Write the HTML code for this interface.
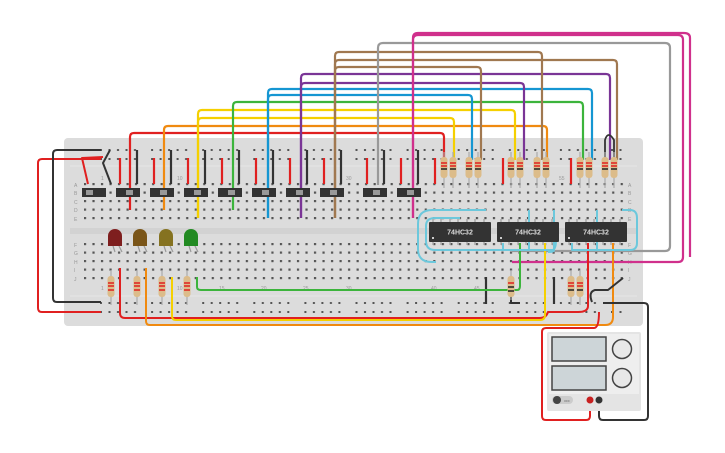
<!DOCTYPE html>
<html><head><style>html,body{margin:0;padding:0;background:#fff;width:725px;height:453px;overflow:hidden}</style></head>
<body>
<svg width="725" height="453" viewBox="0 0 725 453" xmlns="http://www.w3.org/2000/svg" font-family="Liberation Sans, sans-serif">
<defs>
<pattern id="h1" x="83.5" y="183" width="8.52" height="8.5" patternUnits="userSpaceOnUse"><rect x="0.4" y="0" width="2.2" height="2.2" fill="#555"/></pattern>
<pattern id="h2" x="83.5" y="243" width="8.52" height="8.5" patternUnits="userSpaceOnUse"><rect x="0.4" y="0" width="2.2" height="2.2" fill="#555"/></pattern>
<pattern id="r1" x="100" y="149" width="51.1" height="9" patternUnits="userSpaceOnUse">
<rect x="0" y="0" width="2" height="2" fill="#555"/><rect x="8.5" y="0" width="2" height="2" fill="#555"/><rect x="17" y="0" width="2" height="2" fill="#555"/><rect x="25.5" y="0" width="2" height="2" fill="#555"/><rect x="34" y="0" width="2" height="2" fill="#555"/></pattern>
<pattern id="r2" x="100" y="302" width="51.1" height="9" patternUnits="userSpaceOnUse">
<rect x="0" y="0" width="2" height="2" fill="#555"/><rect x="8.5" y="0" width="2" height="2" fill="#555"/><rect x="17" y="0" width="2" height="2" fill="#555"/><rect x="25.5" y="0" width="2" height="2" fill="#555"/><rect x="34" y="0" width="2" height="2" fill="#555"/></pattern>
</defs>
<rect x="64" y="138" width="579" height="188" rx="4" fill="#dcdcdc"/>
<line x1="70" y1="166" x2="637" y2="166" stroke="#e6e6e6"/>
<line x1="70" y1="296" x2="637" y2="296" stroke="#e6e6e6"/>
<rect x="70" y="228" width="567" height="6" fill="#d2d2d2"/>
<rect x="84" y="183" width="540" height="40" fill="url(#h1)"/>
<rect x="84" y="243" width="540" height="40" fill="url(#h2)"/>
<rect x="100" y="149" width="525" height="12" fill="url(#r1)"/>
<rect x="100" y="302" width="525" height="12" fill="url(#r2)"/>
<g font-size="5" fill="#999">
<text x="74" y="187">A</text><text x="74" y="195">B</text><text x="74" y="204">C</text><text x="74" y="212">D</text><text x="74" y="221">E</text>
<text x="74" y="247">F</text><text x="74" y="255">G</text><text x="74" y="264">H</text><text x="74" y="272">I</text><text x="74" y="281">J</text>
<text x="628" y="187">A</text><text x="628" y="195">B</text><text x="628" y="204">C</text><text x="628" y="212">D</text><text x="628" y="221">E</text>
<text x="628" y="247">F</text><text x="628" y="255">G</text><text x="628" y="264">H</text><text x="628" y="272">I</text><text x="628" y="281">J</text>
<text x="101" y="180">1</text><text x="177" y="180">10</text><text x="346" y="180">30</text><text x="559" y="180">55</text>
<text x="101" y="290">1</text><text x="177" y="290">10</text><text x="219" y="290">15</text><text x="261" y="290">20</text><text x="303" y="290">25</text><text x="346" y="290">30</text><text x="431" y="290">40</text><text x="474" y="290">45</text>
</g>
<g fill="none" stroke-width="2.2" stroke-linejoin="round">
<path d="M130 210 V137 Q130 133 134 133 H440 Q444 133 444 137 V160" stroke="#e02020"/>
<path d="M164 210 V130 Q164 126 168 126 H543 Q547 126 547 130 V160" stroke="#f08a10"/>
<path d="M198 218 V122 Q198 118 202 118 H450 Q454 118 454 122 V160" stroke="#f5d000"/>
<path d="M198 218 V114 Q198 110 202 110 H511 Q515 110 515 114 V160" stroke="#f5d000"/>
<path d="M233 210 V106 Q233 102 237 102 H579 Q583 102 583 106 V160" stroke="#3cb43c"/>
<path d="M268 218 V99 Q268 95 272 95 H468 Q472 95 472 99 V160" stroke="#1596d2"/>
<path d="M268 218 V93 Q268 89 272 89 H588 Q592 89 592 93 V160" stroke="#1596d2"/>
<path d="M301 218 V87 Q301 83 305 83 H520 Q524 83 524 87 V160" stroke="#7a3596"/>
<path d="M301 218 V78 Q301 74 305 74 H606 Q610 74 610 78 V160" stroke="#7a3596"/>
<path d="M335 218 V71 Q335 67 339 67 H477 Q481 67 481 71 V160" stroke="#a07850"/>
<path d="M335 218 V64 Q335 60 339 60 H613 Q617 60 617 64 V160" stroke="#a07850"/>
<path d="M335 218 V56 Q335 52 339 52 H538 Q542 52 542 56 V160" stroke="#a07850"/>
<path d="M378 185 V48 Q378 43 383 43 H665 Q670 43 670 48 V246 Q670 251 665 251 H512" stroke="#999"/>
<path d="M413 218 V40 Q413 35 418 35 H678 Q683 35 683 40 V257 Q683 262 678 262 H512" stroke="#d0308c"/>
<path d="M413 218 V38 Q413 33 418 33 H684 Q690 33 690 38 V257" stroke="#d0308c"/>
<path d="M605 160 V140 Q608 130 614 140 V160" stroke="#333" stroke-width="1.8"/>
</g>
<g stroke-width="2.2">
<g stroke="#e02020"><line x1="120" y1="158" x2="120" y2="184"/><line x1="154" y1="158" x2="154" y2="184"/><line x1="188" y1="158" x2="188" y2="184"/><line x1="222" y1="158" x2="222" y2="184"/><line x1="256" y1="158" x2="256" y2="184"/><line x1="290" y1="158" x2="290" y2="184"/><line x1="324" y1="158" x2="324" y2="184"/><line x1="367" y1="158" x2="367" y2="184"/><line x1="401" y1="158" x2="401" y2="184"/><line x1="435" y1="158" x2="435" y2="184"/><line x1="503" y1="158" x2="503" y2="184"/><line x1="571" y1="158" x2="571" y2="184"/></g>
<g stroke="#333"><line x1="137" y1="150" x2="137" y2="184"/><line x1="171" y1="150" x2="171" y2="184"/><line x1="205" y1="150" x2="205" y2="184"/><line x1="239" y1="150" x2="239" y2="184"/><line x1="273" y1="150" x2="273" y2="184"/><line x1="307" y1="150" x2="307" y2="184"/><line x1="341" y1="150" x2="341" y2="184"/><line x1="384" y1="150" x2="384" y2="184"/><line x1="418" y1="150" x2="418" y2="184"/><line x1="486" y1="277" x2="486" y2="304"/><line x1="554" y1="277" x2="554" y2="304"/></g>
</g>
<g fill="none" stroke-width="2" stroke-linejoin="round">
<path d="M101 159 H42 Q38 159 38 163 V308 Q38 312 42 312 H101" stroke="#e02020"/>
<path d="M101 150 H57 Q53 150 53 154 V298 Q53 302 57 302 H101" stroke="#333"/>
<path d="M103 157 L82 158 L88 184" stroke="#e02020"/>
<path d="M110 150 L103 163 L111 184" stroke="#333"/>
<path d="M120 268 V313 Q120 318 125 318 H540 Q546 318 548 312 Q560 312 578 312 Q588 312 588 306 V243" stroke="#e02020"/>
<path d="M146 268 V321 Q146 325 150 325 H605 Q613 325 613 317 V243" stroke="#f08a10"/>
<path d="M172 277 V316 Q172 320 176 320 H540 Q545 320 545 315 V243" stroke="#f5d000"/>
<path d="M197 277 V287 Q197 290 201 290 H517 Q520 290 520 286 V243" stroke="#3cb43c"/>
<path d="M590 400 V416 Q590 420 586 420 H546 Q542 420 542 416 V332 Q542 328 546 328 H594 Q599 328 599 312" stroke="#e02020"/>
<path d="M599 400 V416 Q599 420 603 420 H644 Q648 420 648 416 V307 Q648 303 644 303 H603" stroke="#333"/>
<path d="M623 278 L608 290 H595 Q588 292 592 302" stroke="#333"/>
<path d="M511 293 V303 H520" stroke="#333"/>
</g>
<g fill="none" stroke="#6cc8dc" stroke-width="2" stroke-linejoin="round">
<path d="M486 210 H432 Q418 210 418 224 V249 Q418 262 432 262 H436"/>
<path d="M460 218 H435 Q426 218 426 226 V241 Q426 250 435 250 H503"/>
<path d="M529 210 V250 M554 210 V250 Q554 252 548 252"/>
<path d="M503 243 V250 H552 Q556 250 556 240"/>
<path d="M597 210 V250 M622 210 H630 Q637 210 637 218 V243 Q637 250 630 250 H572 V243"/>
</g>
<g fill="#333">
<rect x="82" y="188" width="24" height="9"/><rect x="116" y="188" width="24" height="9"/><rect x="150" y="188" width="24" height="9"/><rect x="184" y="188" width="24" height="9"/><rect x="218" y="188" width="24" height="9"/><rect x="252" y="188" width="24" height="9"/><rect x="286" y="188" width="24" height="9"/><rect x="320" y="188" width="24" height="9"/><rect x="363" y="188" width="24" height="9"/><rect x="397" y="188" width="24" height="9"/>
</g>
<g fill="#999">
<rect x="86" y="190" width="7" height="5"/><rect x="126" y="190" width="7" height="5"/><rect x="160" y="190" width="7" height="5"/><rect x="194" y="190" width="7" height="5"/><rect x="228" y="190" width="7" height="5"/><rect x="262" y="190" width="7" height="5"/><rect x="296" y="190" width="7" height="5"/><rect x="330" y="190" width="7" height="5"/><rect x="373" y="190" width="7" height="5"/><rect x="407" y="190" width="7" height="5"/>
</g>
<g stroke="#999" stroke-width="1.2">
<path d="M113 246 l2 6 M119 246 l3 6 M138 246 l2 6 M144 246 l3 6 M164 246 l2 6 M170 246 l3 6 M189 246 l2 6 M195 246 l3 6"/>
</g>
<g>
<path d="M108 246 V236 a7 7 0 0 1 14 0 V246 Z" fill="#7e1e1e"/>
<path d="M133 246 V236 a7 7 0 0 1 14 0 V246 Z" fill="#7a5518"/>
<path d="M159 246 V236 a7 7 0 0 1 14 0 V246 Z" fill="#857220"/>
<path d="M184 246 V236 a7 7 0 0 1 14 0 V246 Z" fill="#228a22"/>
</g>
<g stroke="#aaa" stroke-width="1.2">
<line x1="444" y1="152" x2="444" y2="188"/><line x1="453" y1="152" x2="453" y2="188"/><line x1="469" y1="152" x2="469" y2="188"/><line x1="478" y1="152" x2="478" y2="188"/><line x1="511" y1="152" x2="511" y2="188"/><line x1="520" y1="152" x2="520" y2="188"/><line x1="537" y1="152" x2="537" y2="188"/><line x1="546" y1="152" x2="546" y2="188"/><line x1="580" y1="152" x2="580" y2="188"/><line x1="589" y1="152" x2="589" y2="188"/><line x1="605" y1="152" x2="605" y2="188"/><line x1="614" y1="152" x2="614" y2="188"/>
<line x1="111" y1="270" x2="111" y2="305"/><line x1="137" y1="270" x2="137" y2="305"/><line x1="162" y1="270" x2="162" y2="305"/><line x1="187" y1="270" x2="187" y2="305"/><line x1="511" y1="270" x2="511" y2="300"/><line x1="571" y1="270" x2="571" y2="305"/><line x1="580" y1="270" x2="580" y2="305"/>
</g>
<g fill="#dcbc8a">
<rect x="440.5" y="157" width="7" height="21" rx="3"/><rect x="449.5" y="157" width="7" height="21" rx="3"/><rect x="465.5" y="157" width="7" height="21" rx="3"/><rect x="474.5" y="157" width="7" height="21" rx="3"/><rect x="507.5" y="157" width="7" height="21" rx="3"/><rect x="516.5" y="157" width="7" height="21" rx="3"/><rect x="533.5" y="157" width="7" height="21" rx="3"/><rect x="542.5" y="157" width="7" height="21" rx="3"/><rect x="576.5" y="157" width="7" height="21" rx="3"/><rect x="585.5" y="157" width="7" height="21" rx="3"/><rect x="601.5" y="157" width="7" height="21" rx="3"/><rect x="610.5" y="157" width="7" height="21" rx="3"/>
<rect x="107.5" y="276" width="7" height="21" rx="3"/><rect x="133.5" y="276" width="7" height="21" rx="3"/><rect x="158.5" y="276" width="7" height="21" rx="3"/><rect x="183.5" y="276" width="7" height="21" rx="3"/><rect x="507.5" y="276" width="7" height="21" rx="3"/><rect x="567.5" y="276" width="7" height="21" rx="3"/><rect x="576.5" y="276" width="7" height="21" rx="3"/>
</g>
<g stroke-width="1.6">
<g stroke="#e02020">
<path d="M441 163h6M450 163h6M466 163h6M475 163h6M508 163h6M517 163h6M534 163h6M543 163h6M577 163h6M586 163h6M602 163h6M611 163h6 M441 166h6M450 166h6M466 166h6M475 166h6M508 166h6M517 166h6M534 166h6M543 166h6M577 166h6M586 166h6M602 166h6M611 166h6"/>
<path d="M108 283h6M134 283h6M159 283h6M184 283h6M508 283h6M568 283h6M577 283h6 M108 286h6M134 286h6M159 286h6M184 286h6M568 286h6M577 286h6 M108 290h6M134 290h6M159 290h6M184 290h6"/>
</g>
<g stroke="#222">
<path d="M441 169h6M450 169h6M466 169h6M475 169h6M508 169h6M517 169h6M534 169h6M543 169h6M577 169h6M586 169h6M602 169h6M611 169h6 M508 287h6 M508 291h6 M568 290h6 M577 290h6"/>
</g>
</g>
<g stroke="#aaa" stroke-width="1.5">
<path d="M433 219v4M441 219v4M450 219v4M458 219v4M467 219v4M475 219v4M484 219v4 M433 241v4M441 241v4M450 241v4M458 241v4M467 241v4M475 241v4M484 241v4"/>
<path d="M501 219v4M509 219v4M518 219v4M526 219v4M535 219v4M543 219v4M552 219v4 M501 241v4M509 241v4M518 241v4M526 241v4M535 241v4M543 241v4M552 241v4"/>
<path d="M569 219v4M577 219v4M586 219v4M594 219v4M603 219v4M611 219v4M620 219v4 M569 241v4M577 241v4M586 241v4M594 241v4M603 241v4M611 241v4M620 241v4"/>
</g>
<g fill="#333"><rect x="429" y="222" width="62" height="20" rx="1"/><rect x="497" y="222" width="62" height="20" rx="1"/><rect x="565" y="222" width="62" height="20" rx="1"/></g>
<g fill="#ddd" font-size="7" font-weight="bold" text-anchor="middle"><text x="460" y="234.5">74HC32</text><text x="528" y="234.5">74HC32</text><text x="596" y="234.5">74HC32</text></g>
<g fill="#fff"><circle cx="433" cy="238" r="1"/><circle cx="501" cy="238" r="1"/><circle cx="569" cy="238" r="1"/></g>
<rect x="547" y="332" width="94" height="79" rx="2" fill="#e4e4e4"/>
<rect x="549" y="334" width="90" height="60" fill="#eee"/>
<rect x="552" y="337" width="54" height="24" fill="#cdd5d8" stroke="#444" stroke-width="1.5"/>
<rect x="552" y="366" width="54" height="24" fill="#cdd5d8" stroke="#444" stroke-width="1.5"/>
<circle cx="622" cy="349" r="9.5" fill="#e8e8e8" stroke="#444" stroke-width="1.5"/>
<circle cx="622" cy="378" r="9.5" fill="#e8e8e8" stroke="#444" stroke-width="1.5"/>
<rect x="552" y="396" width="21" height="8" rx="4" fill="#ccc"/>
<circle cx="557" cy="400" r="4" fill="#444"/>
<text x="564" y="402" font-size="3" fill="#666">OFF</text>
<circle cx="590" cy="400" r="3.5" fill="#c82020"/>
<circle cx="599" cy="400" r="3.5" fill="#333"/>
</svg>
</body></html>
